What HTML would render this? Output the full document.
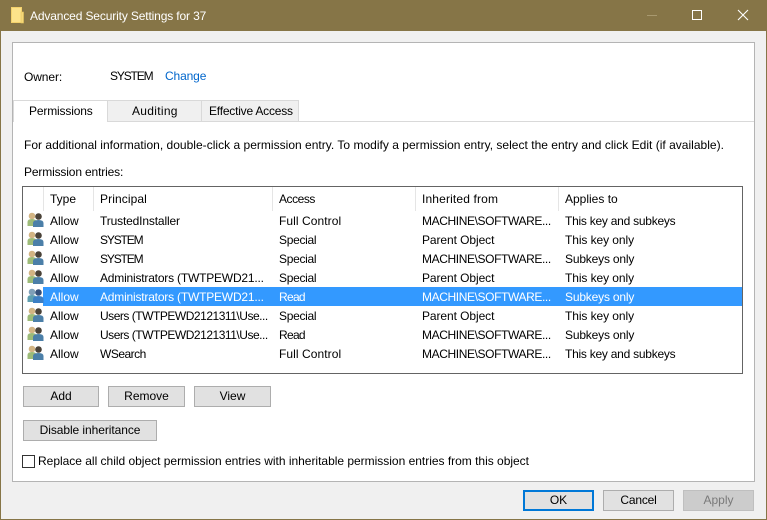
<!DOCTYPE html>
<html>
<head>
<meta charset="utf-8">
<style>
html,body{margin:0;padding:0;width:767px;height:520px;overflow:hidden;background:#f0f0f0}
body{position:relative;font-family:"Liberation Sans","DejaVu Sans",sans-serif;font-size:12px;color:#000}
.a{position:absolute;white-space:nowrap;line-height:16px}
.b{position:absolute;box-sizing:border-box;background:#e1e1e1;border:1px solid #adadad;text-align:center;line-height:19px;height:21px}
.h{position:absolute;top:187px;width:1px;height:24px;background:#e5e5e5}
.sel{color:#fff}
.m{letter-spacing:-.39px}
.p{letter-spacing:-.08px}
.k{letter-spacing:-.08px}
.s{letter-spacing:-.18px}
.t{letter-spacing:-.25px}
.y{letter-spacing:-1.15px}
.r{letter-spacing:-.7px}
.ad{letter-spacing:-.2px}
.us{letter-spacing:-.48px}
.c{letter-spacing:-.3px}
.f{letter-spacing:.07px}
svg{position:absolute}
</style>
</head>
<body>
<!-- window frame -->
<div style="position:absolute;left:0;top:0;width:767px;height:31px;background:#867547"></div>
<div style="position:absolute;left:0;top:0;width:1px;height:520px;background:#867547"></div>
<div style="position:absolute;left:766px;top:0;width:1px;height:520px;background:#867547"></div>
<div style="position:absolute;left:0;top:519px;width:767px;height:1px;background:#867547"></div>
<svg style="left:11px;top:7px" width="14" height="17" viewBox="0 0 14 17"><rect x="0.5" y="0.5" width="10" height="15" fill="#fde38a" stroke="#f4d26c"/><rect x="10" y="5" width="2.5" height="11" fill="#f6d878" stroke="#e7c660" stroke-width=".6"/></svg>
<div class="a" style="left:30px;top:8px;color:#fff;letter-spacing:-.14px">Advanced Security Settings for 37</div>
<div style="position:absolute;left:647px;top:15px;width:10px;height:1px;background:#a8996f"></div>
<div style="position:absolute;left:692px;top:10px;width:10px;height:10px;box-sizing:border-box;border:1px solid #fff"></div>
<svg style="left:737px;top:9px" width="12" height="12" viewBox="0 0 12 12"><path d="M1 1L11 11M11 1L1 11" stroke="#fff" stroke-width="1.1"/></svg>

<!-- panel -->
<div style="position:absolute;left:12px;top:42px;width:743px;height:440px;box-sizing:border-box;background:#fff;border:1px solid #b4b4b4"></div>

<div class="a" style="left:24px;top:69px;letter-spacing:-.1px">Owner:</div>
<div class="a" style="left:110px;top:68px;letter-spacing:-1.15px">SYSTEM</div>
<div class="a" style="left:165px;top:68px;color:#0066cc;letter-spacing:-.13px">Change</div>

<!-- tabs -->
<div style="position:absolute;left:13px;top:121px;width:741px;height:1px;background:#d9d9d9"></div>
<div style="position:absolute;left:107px;top:100px;width:95px;height:21px;box-sizing:border-box;background:#f0f0f0;border:1px solid #d9d9d9;border-left:0;border-bottom:0"></div>
<div style="position:absolute;left:202px;top:100px;width:97px;height:21px;box-sizing:border-box;background:#f0f0f0;border:1px solid #d9d9d9;border-left:0;border-bottom:0"></div>
<div style="position:absolute;left:13px;top:100px;width:95px;height:22px;box-sizing:border-box;background:#fff;border:1px solid #d9d9d9;border-bottom:0"></div>
<div class="a" style="left:29px;top:103px;letter-spacing:-.16px">Permissions</div>
<div class="a" style="left:132px;top:103px;letter-spacing:.3px">Auditing</div>
<div class="a" style="left:209px;top:103px;letter-spacing:-.21px">Effective Access</div>

<div class="a" style="left:24px;top:137px;letter-spacing:.017px">For additional information, double-click a permission entry. To modify a permission entry, select the entry and click Edit (if available).</div>
<div class="a" style="left:24px;top:164px;letter-spacing:-.15px">Permission entries:</div>

<!-- list -->
<div style="position:absolute;left:22px;top:186px;width:721px;height:188px;box-sizing:border-box;background:#fff;border:1px solid #646464"></div>
<div class="h" style="left:43px"></div><div class="h" style="left:93px"></div><div class="h" style="left:272px"></div><div class="h" style="left:415px"></div><div class="h" style="left:558px"></div>
<div class="a" style="left:50px;top:191px">Type</div>
<div class="a" style="left:100px;top:191px;letter-spacing:.1px">Principal</div>
<div class="a" style="left:279px;top:191px;letter-spacing:-.45px">Access</div>
<div class="a" style="left:422px;top:191px;letter-spacing:.15px">Inherited from</div>
<div class="a" style="left:565px;top:191px">Applies to</div>

<div style="position:absolute;left:43px;top:287px;width:699px;height:19px;background:#3399ff"></div>

<svg width="0" height="0" style="position:absolute"><defs>
<g id="u"><circle cx="5" cy="4" r="3.3" fill="#d2b483"/><path d="M0.500 14V10Q0.500 7 5 7Q9.500 7 9.500 10V14Z" fill="#9dbb78"/><circle cx="11.500" cy="4.500" r="3.300" fill="#4a4238"/><path d="M6 15V11Q6 8 11.500 8Q16.500 8 16.500 11V15Z" fill="#4b7fa8"/></g>
<g id="v"><circle cx="5" cy="4" r="3.3" fill="#7f9fb8"/><path d="M0.500 14V10Q0.500 7 5 7Q9.500 7 9.500 10V14Z" fill="#5f9fb0"/><circle cx="11.500" cy="4.500" r="3.300" fill="#35507a"/><path d="M6 15V11Q6 8 11.500 8Q16.500 8 16.500 11V15Z" fill="#3d7fc4"/></g>
</defs></svg>
<svg style="left:27px;top:212px" width="18" height="16"><use href="#u"/></svg>
<svg style="left:27px;top:231px" width="18" height="16"><use href="#u"/></svg>
<svg style="left:27px;top:250px" width="18" height="16"><use href="#u"/></svg>
<svg style="left:27px;top:269px" width="18" height="16"><use href="#u"/></svg>
<svg style="left:27px;top:288px" width="18" height="16"><use href="#v"/></svg>
<svg style="left:27px;top:307px" width="18" height="16"><use href="#u"/></svg>
<svg style="left:27px;top:326px" width="18" height="16"><use href="#u"/></svg>
<svg style="left:27px;top:345px" width="18" height="16"><use href="#u"/></svg>

<!-- row 1 -->
<div class="a" style="left:50px;top:213px">Allow</div><div class="a" style="left:100px;top:213px;letter-spacing:-.15px">TrustedInstaller</div><div class="a f" style="left:279px;top:213px">Full Control</div><div class="a m" style="left:422px;top:213px">MACHINE\SOFTWARE...</div><div class="a t" style="left:565px;top:213px">This key and subkeys</div>
<!-- row 2 -->
<div class="a" style="left:50px;top:232px">Allow</div><div class="a y" style="left:100px;top:232px">SYSTEM</div><div class="a c" style="left:279px;top:232px">Special</div><div class="a p" style="left:422px;top:232px">Parent Object</div><div class="a k" style="left:565px;top:232px">This key only</div>
<!-- row 3 -->
<div class="a" style="left:50px;top:251px">Allow</div><div class="a y" style="left:100px;top:251px">SYSTEM</div><div class="a c" style="left:279px;top:251px">Special</div><div class="a m" style="left:422px;top:251px">MACHINE\SOFTWARE...</div><div class="a s" style="left:565px;top:251px">Subkeys only</div>
<!-- row 4 -->
<div class="a" style="left:50px;top:270px">Allow</div><div class="a ad" style="left:100px;top:270px">Administrators (TWTPEWD21...</div><div class="a c" style="left:279px;top:270px">Special</div><div class="a p" style="left:422px;top:270px">Parent Object</div><div class="a k" style="left:565px;top:270px">This key only</div>
<!-- row 5 -->
<div class="a sel" style="left:50px;top:289px">Allow</div><div class="a sel ad" style="left:100px;top:289px">Administrators (TWTPEWD21...</div><div class="a sel r" style="left:279px;top:289px">Read</div><div class="a sel m" style="left:422px;top:289px">MACHINE\SOFTWARE...</div><div class="a sel s" style="left:565px;top:289px">Subkeys only</div>
<!-- row 6 -->
<div class="a" style="left:50px;top:308px">Allow</div><div class="a us" style="left:100px;top:308px">Users (TWTPEWD2121311\Use...</div><div class="a c" style="left:279px;top:308px">Special</div><div class="a p" style="left:422px;top:308px">Parent Object</div><div class="a k" style="left:565px;top:308px">This key only</div>
<!-- row 7 -->
<div class="a" style="left:50px;top:327px">Allow</div><div class="a us" style="left:100px;top:327px">Users (TWTPEWD2121311\Use...</div><div class="a r" style="left:279px;top:327px">Read</div><div class="a m" style="left:422px;top:327px">MACHINE\SOFTWARE...</div><div class="a s" style="left:565px;top:327px">Subkeys only</div>
<!-- row 8 -->
<div class="a" style="left:50px;top:346px">Allow</div><div class="a" style="left:100px;top:346px;letter-spacing:-.5px">WSearch</div><div class="a f" style="left:279px;top:346px">Full Control</div><div class="a m" style="left:422px;top:346px">MACHINE\SOFTWARE...</div><div class="a t" style="left:565px;top:346px">This key and subkeys</div>

<!-- buttons -->
<div class="b" style="left:23px;top:386px;width:76px">Add</div>
<div class="b" style="left:108px;top:386px;width:77px">Remove</div>
<div class="b" style="left:194px;top:386px;width:77px">View</div>
<div class="b" style="left:23px;top:420px;width:134px;letter-spacing:-.07px">Disable inheritance</div>

<div style="position:absolute;left:22px;top:455px;width:13px;height:13px;box-sizing:border-box;background:#fff;border:1px solid #333"></div>
<div class="a" style="left:38px;top:453px;letter-spacing:-.013px">Replace all child object permission entries with inheritable permission entries from this object</div>

<div class="b" style="left:523px;top:490px;width:71px;border:2px solid #0078d7;line-height:17px">OK</div>
<div class="b" style="left:603px;top:490px;width:71px;letter-spacing:-.2px">Cancel</div>
<div class="b" style="left:683px;top:490px;width:71px;background:#cccccc;border-color:#bfbfbf;color:#7a7a7a">Apply</div>
</body>
</html>
